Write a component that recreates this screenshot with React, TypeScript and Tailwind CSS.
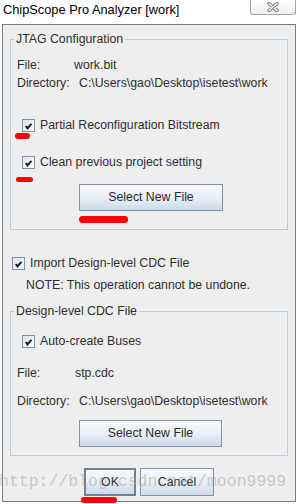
import React from 'react'

const font = { fontFamily: '"Liberation Sans", Arial, sans-serif' }

const Check: React.FC = () => (
  <span className="inline-flex w-[13px] h-[13px] border border-[#8094ab] bg-gradient-to-br from-[#dfe6ee] to-[#fbfcfd] items-center justify-center shrink-0">
    <svg width="11" height="11" viewBox="0 0 11 11">
      <path d="M2.8 6 L4.5 8.4 L8.4 3.8" stroke="#1c1c1c" strokeWidth="2" fill="none" />
    </svg>
  </span>
)

const CheckRow: React.FC<{ label: string; className: string }> = ({ label, className }) => (
  <div className={`flex items-center h-[14px] gap-[5px] ${className}`}>
    <Check />
    <span className="leading-[14px]">{label}</span>
  </div>
)

const Button: React.FC<{ label: string; className: string }> = ({ label, className }) => (
  <button className={`flex items-center justify-center bg-gradient-to-b from-[#f6f8fb] via-[#eaf0f7] to-[#ccdaea] text-[#2a2a2a] ${className}`}>
    {label}
  </button>
)

const InfoRow: React.FC<{ label: string; w: string; value: string; className: string }> = ({ label, w, value, className }) => (
  <div className={`flex h-[14px] leading-[14px] pl-[6px] ${className}`}>
    <span className={w}>{label}</span>
    <span>{value}</span>
  </div>
)

export default function App() {
  return (
    <div className="relative w-[298px] h-[504px] bg-white overflow-hidden text-[12.3px] text-[#2e2e2e]" style={font}>
      {/* title bar */}
      <div className="flex justify-between h-[24px]">
        <span className="pl-[3px] pt-[2px] text-[12.8px] leading-[16px] text-black">ChipScope Pro Analyzer [work]</span>
        <div className="mr-[2px] w-[46px] h-[15px] border border-t-0 border-[#a3a3a3] rounded-b-[3px] bg-gradient-to-b from-white to-[#eef0f3] flex items-center justify-center">
          <svg width="12" height="10" viewBox="0 0 12 10">
            <path d="M2 1.5 L10 8.5 M10 1.5 L2 8.5" stroke="#7a7a7a" strokeWidth="3.4" strokeLinecap="round" />
            <path d="M2 1.5 L10 8.5 M10 1.5 L2 8.5" stroke="#ffffff" strokeWidth="1.4" strokeLinecap="round" />
          </svg>
        </div>
      </div>

      {/* dialog body */}
      <div className="ml-[2px] w-[294px] h-[478px] border border-[#7d7d7d] bg-[#eeeeee] flex flex-col">
        <fieldset className="ml-[7px] mt-[7px] w-[278px] border border-[#b8cde3] pb-[18px]">
          <legend className="ml-[3px] px-[2px] leading-[14px]">JTAG Configuration</legend>
          <InfoRow className="mt-[12px]" label="File:" w="w-[57px]" value="work.bit" />
          <InfoRow className="mt-[4px]" label="Directory:" w="w-[62px]" value="C:\Users\gao\Desktop\isetest\work" />
          <CheckRow className="mt-[28px] pl-[11px]" label="Partial Reconfiguration Bitstream" />
          <CheckRow className="mt-[23px] pl-[11px]" label="Clean previous project setting" />
          <Button className="mt-[15px] ml-[68px] w-[144px] h-[27px] border border-[#7f93ab]" label="Select New File" />
        </fieldset>

        <CheckRow className="mt-[26px] pl-[9px] gap-[4px]" label="Import Design-level CDC File" />
        <div className="mt-[8px] pl-[23px] h-[14px] leading-[14px]">NOTE: This operation cannot be undone.</div>

        <fieldset className="ml-[7px] mt-[12px] w-[278px] border border-[#b8cde3] pb-[8px]">
          <legend className="ml-[3px] px-[2px] leading-[14px]">Design-level CDC File</legend>
          <CheckRow className="mt-[16px] pl-[11px]" label="Auto-create Buses" />
          <InfoRow className="mt-[18px]" label="File:" w="w-[58px]" value="stp.cdc" />
          <InfoRow className="mt-[14px]" label="Directory:" w="w-[62px]" value="C:\Users\gao\Desktop\isetest\work" />
          <Button className="mt-[12px] ml-[68px] w-[143px] h-[27px] border border-[#7f93ab]" label="Select New File" />
        </fieldset>

        <div className="flex mt-[12px] ml-[81px] gap-[4px]">
          <Button className="w-[52px] h-[28px] border-2 border-[#6d819a]" label="OK" />
          <Button className="w-[74px] h-[28px] border border-[#7f93ab]" label="Cancel" />
        </div>
      </div>

      {/* watermark */}
      <div className="absolute left-[-1px] top-[474px] text-[16.5px] leading-none text-[#a0a0a0]/50 pointer-events-none" style={{ fontFamily: '"Liberation Mono", "Courier New", monospace' }}>
        http://blog.csdn.net/moon9999
      </div>

      {/* red annotation marks */}
      <div className="absolute left-[15px] top-[133px] w-[15px] h-[6px] rounded-full bg-[#ff0000]" />
      <div className="absolute left-[16px] top-[177px] w-[17px] h-[5px] rounded-full bg-[#ff0000]" />
      <div className="absolute left-[79px] top-[216px] w-[49px] h-[7px] rounded-full bg-[#ff0000]" />
      <div className="absolute left-[81px] top-[497px] w-[36px] h-[6px] rounded-full bg-[#ff0000]" />
    </div>
  )
}
